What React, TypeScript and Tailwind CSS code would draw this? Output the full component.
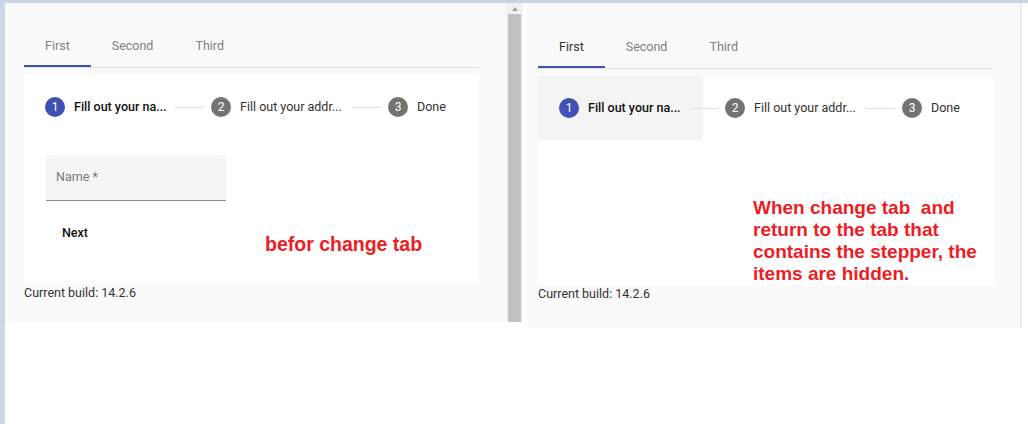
const steps = [
  { n: 1, label: 'Fill out your na...', w: 'w-[94px]' },
  { n: 2, label: 'Fill out your addr...', w: 'w-[105px]' },
  { n: 3, label: 'Done', w: '' },
];

function Tabs({ activeDark }: { activeDark: boolean }) {
  const tabs = ['First', 'Second', 'Third'];
  return (
    <div className="flex border-b border-[#e0e0e0]">
      {tabs.map((t, i) => (
        <div
          key={t}
          className={
            'flex h-[41px] items-center px-[21px] text-[12.5px] ' +
            (i === 0 ? 'border-b-2 border-[#3f51b5] pt-[2px] ' : '') +
            (i === 0 && activeDark ? 'text-[#333]' : 'text-[#808080]')
          }
        >
          {t}
        </div>
      ))}
    </div>
  );
}

function StepperHeader({ highlightFirst }: { highlightFirst: boolean }) {
  return (
    <div className="flex h-[64px] items-center">
      {steps.map((s, i) => (
        <div key={s.n} className="contents">
          {i > 0 && <div className="-mx-[14px] h-px w-[29px] shrink-0 bg-[#e0e0e0]" />}
          <div
            className={
              'flex h-full items-center gap-[9px] px-[21px] ' +
              (i === 0 && highlightFirst ? 'bg-[#f4f4f4]' : '')
            }
          >
            <div
              className={
                'flex h-5 w-5 shrink-0 items-center justify-center rounded-full text-[12px] text-white ' +
                (i === 0 ? 'bg-[#3f51b5]' : 'bg-[#737373]')
              }
            >
              {s.n}
            </div>
            <div
              className={
                'whitespace-nowrap text-[12.5px] ' +
                s.w +
                (i === 0 ? ' font-medium text-[#111]' : ' text-[#333]')
              }
            >
              {s.label}
            </div>
          </div>
        </div>
      ))}
    </div>
  );
}

export default function App() {
  return (
    <div className="flex h-[424px] w-full flex-col bg-white font-['Roboto',sans-serif]">
      <div className="h-[3px] w-full bg-[#c9d4e7]" />
      <div className="flex flex-1 items-start">
        <div className="h-full w-[5px] shrink-0 bg-[#ccd6e8]" />

        {/* before switching tabs */}
        <div className="h-[319px] w-[501px] shrink-0 bg-[#fafafa] pl-[19px] pt-[23px]">
          <div className="w-[455px]">
            <Tabs activeDark={false} />
            <div className="mt-[7px] h-[209px] bg-white">
              <StepperHeader highlightFirst={false} />
              <div className="flex">
                <div className="w-[202px] pl-[22px] pt-[16px]">
                  <div className="flex h-[46px] items-center rounded-t-[4px] border-b border-[#8c8c8c] bg-[#f5f5f5] px-[10px] text-[12.5px] text-[#777]">
                    Name *
                  </div>
                  <button className="mt-[17px] h-[31px] px-[16px] text-[12.5px] font-medium text-[#111]">
                    Next
                  </button>
                </div>
                <div className="ml-[39px] mt-[94px] font-['Liberation_Sans',Arial,sans-serif] text-[19.5px] font-bold leading-[22px] text-[#ee1c25]">
                  befor change tab
                </div>
              </div>
            </div>
            <div className="text-[12.5px] leading-[18px] text-[#333]">Current build: 14.2.6</div>
          </div>
        </div>

        {/* scrollbar */}
        <div className="flex h-[319px] w-[17px] shrink-0 flex-col items-center bg-[#f1f1f1]">
          <div className="mt-[4px] h-0 w-0 border-x-[3.5px] border-b-[4px] border-x-transparent border-b-[#a3a3a3]" />
          <div className="mt-[3px] w-[13px] flex-1 bg-[#c1c1c1]" />
        </div>

        <div className="w-[4px] shrink-0" />

        {/* after returning to the tab */}
        <div className="h-[325px] w-[493px] shrink-0 bg-[#fafafa] pl-[11px] pt-[24px]">
          <div className="w-[455px]">
            <Tabs activeDark />
            <div className="mt-[7px] h-[209px] bg-white">
              <StepperHeader highlightFirst />
              <div className="pl-[215px] pt-[57px] font-['Liberation_Sans',Arial,sans-serif] text-[19px] font-bold leading-[22px] text-[#ee1c25]">
                When change tab &nbsp;and
                <br />
                return to the tab that
                <br />
                contains the stepper, the
                <br />
                items are hidden.
              </div>
            </div>
            <div className="text-[12.5px] leading-[18px] text-[#333]">Current build: 14.2.6</div>
          </div>
        </div>
        <div className="h-[325px] w-[2px] shrink-0 bg-[#ececec]" />
      </div>
    </div>
  );
}
